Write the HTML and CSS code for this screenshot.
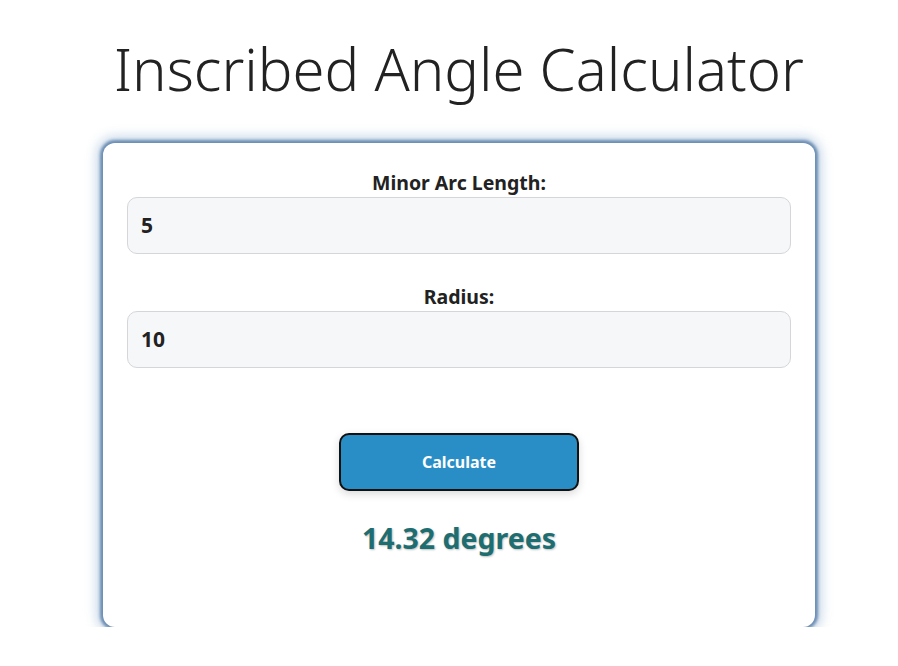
FILE: index.html
```html
<!DOCTYPE html>
<html lang="en">
<head>
  <meta charset="UTF-8">
  <meta name="viewport" content="width=device-width, initial-scale=1.0">
  <title>Inscribed Angle Calculator</title>
  <link rel="stylesheet" href="styles.css">
</head>
<body>

  <h1 class="title">Inscribed Angle Calculator</h1>

  <!-- Carte du calculateur -->
  <div class="calculator">
    <div class="field">
      <label for="arc">Minor Arc Length:</label>
      <input type="text" id="arc" value="5">
    </div>

    <div class="field">
      <label for="radius">Radius:</label>
      <input type="text" id="radius" value="10">
    </div>

    <button class="calc-btn" onclick="calculate()">Calculate</button>

    <div class="result" id="result">14.32 degrees</div>
  </div>

  <script>
    // angle inscrit = (arc / rayon) en degrés / 2
    function calculate() {
      const arc = parseFloat(document.getElementById('arc').value);
      const radius = parseFloat(document.getElementById('radius').value);
      if (isNaN(arc) || isNaN(radius) || radius === 0) {
        document.getElementById('result').textContent = 'Invalid input';
        return;
      }
      const angle = (arc / radius) * (180 / Math.PI) / 2;
      document.getElementById('result').textContent = angle.toFixed(2) + ' degrees';
    }
  </script>

</body>
</html>
```

FILE: styles.css
```css
body {
  margin: 0;
  padding-left: 20px;
  background: #fff;
  font-family: "Noto Sans", "Open Sans", sans-serif;
  color: #222;
}

.title {
  text-align: center;
  font-weight: 300;
  font-size: 58px;
  margin: 34px 0 39px;
  line-height: 1.2;
  color: #222;
}

/* Carte */
.calculator {
  width: 664px;
  margin: 0 auto;
  padding: 27px 24px 70px;
  background: #fff;
  border-radius: 12px;
  box-shadow: 0 0 3px 3px rgba(90, 128, 170, 0.85), 0 0 12px 6px rgba(120, 160, 200, 0.45);
  display: flex;
  flex-direction: column;
  align-items: center;
}

.field {
  width: 100%;
  display: flex;
  flex-direction: column;
  align-items: center;
  margin-bottom: 30px;
}

.field label {
  font-weight: bold;
  font-size: 19.5px;
  line-height: 26px;
  margin-bottom: 1px;
  color: #222;
}

.field input {
  box-sizing: border-box;
  width: 100%;
  height: 57px;
  padding: 0 13px;
  font-family: inherit;
  font-size: 21px;
  font-weight: bold;
  color: #222;
  background: #f6f7f9;
  border: 1px solid #d4d6d9;
  border-radius: 10px;
}

.calc-btn {
  margin-top: 35px;
  width: 240px;
  height: 58px;
  background: #2a8ec6;
  color: #fff;
  font-family: inherit;
  font-size: 16px;
  font-weight: bold;
  border: 2px solid #111;
  border-radius: 10px;
  box-shadow: 0 3px 8px rgba(0, 0, 0, 0.15);
  cursor: pointer;
}

.result {
  margin-top: 28px;
  font-size: 28.5px;
  font-weight: bold;
  color: #1e6d70;
  text-shadow: 1px 1px 2px rgba(0, 0, 0, 0.25);
}
```
